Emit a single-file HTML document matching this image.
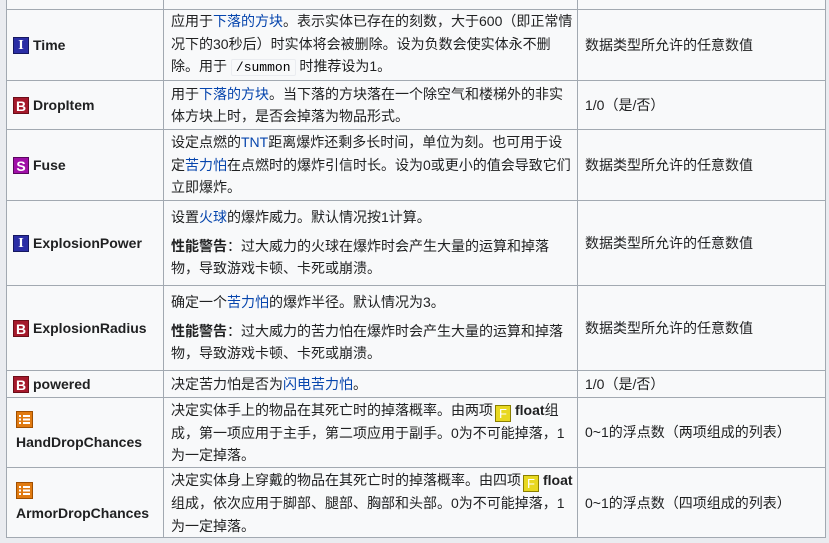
<!DOCTYPE html>
<html><head><meta charset="utf-8"><style>
*{margin:0;padding:0;box-sizing:border-box}
body{width:829px;height:543px;overflow:hidden;background:#eaecf0;font-family:"Liberation Sans","Noto Sans CJK SC",sans-serif;font-size:14px;color:#202122;position:relative}
.t{position:absolute;left:6px;top:-1px;width:820px;height:539px;background:#f8f9fa;border:1px solid #a2a9b1}
.r{position:absolute;left:6px;width:820px;border-top:1px solid #a2a9b1}
.c{position:absolute;top:0;bottom:0;display:flex;flex-direction:column;justify-content:center;line-height:22.5px}
.c1{left:0;width:157px;padding-left:7px;font-weight:bold}
.c1 .n{display:flex;align-items:center}
.c2{left:157px;width:414px;padding-left:7px;padding-right:9px;border-left:1px solid #a2a9b1}
.c3{left:571px;width:249px;padding-left:7px;border-left:1px solid #a2a9b1}
a{color:#0645ad;text-decoration:none}
.i{display:inline-block;width:16px;height:17px;color:#fff;font-size:14px;line-height:16px;text-align:center;font-weight:bold;margin-right:4px;font-family:"Liberation Serif",serif}
.I{background:#2b2ea5;border:1px solid #161860}
.B{background:#a5192b;border:1px solid #6b0d18;font-family:"Liberation Sans",sans-serif}
.S{background:#a010a8;border:1px solid #5a065e;font-family:"Liberation Sans",sans-serif}
.L{display:block;width:17px;height:17px;background:#e07a10;border:1px solid #a04f00;margin:0 0 3px 0;position:relative}
.L:before{content:"";position:absolute;left:2px;top:3px;width:2px;height:9px;background:repeating-linear-gradient(#fff 0 2px,transparent 2px 3.5px)}
.L:after{content:"";position:absolute;left:6px;top:3px;width:7px;height:9px;background:repeating-linear-gradient(#fff 0 2px,transparent 2px 3.5px)}
.F{display:inline-block;width:16px;height:17px;background:#e8d820;border:1px solid #8a7f00;color:#fff;font-size:13px;line-height:15px;text-align:center;margin:0 4px 0 2px;vertical-align:-3px}
.nw{white-space:nowrap}
code{font-family:"Liberation Mono",monospace;font-size:13px;background:#f8f9fa;border:1px solid #eaecf0;padding:0 4px;border-radius:2px;color:#000}
p+p{margin-top:6px}
</style></head><body>
<div class="t"></div>
<div class="r" style="top:-1px;height:10px"><div class="c c2"></div><div class="c c3"></div></div>
<div class="r" style="top:9px;height:71px"><div class="c c1"><div class="n"><span class="i I">I</span>Time</div></div><div class="c c2" style="padding-right:3px"><div>应用于<a>下落的方块</a>。表示实体已存在的刻数，大于600（即正常情况下的30秒后）时实体将会被删除。设为负数会使实体永不删除。用于 <code>/summon</code> 时推荐设为1。</div></div><div class="c c3">数据类型所允许的任意数值</div></div>
<div class="r" style="top:80px;height:49px"><div class="c c1"><div class="n"><span class="i B">B</span>DropItem</div></div><div class="c c2"><div>用于<a>下落的方块</a>。当下落的方块落在一个除空气和楼梯外的非实体方块上时，是否会掉落为物品形式。</div></div><div class="c c3">1/0（是/否）</div></div>
<div class="r" style="top:129px;height:71px"><div class="c c1"><div class="n"><span class="i S">S</span>Fuse</div></div><div class="c c2" style="padding-right:3px"><div>设定点燃的<a>TNT</a>距离爆炸还剩多长时间，单位为刻。也可用于设定<a>苦力怕</a>在点燃时的爆炸引信时长。设为0或更小的值会导致它们立即爆炸。</div></div><div class="c c3">数据类型所允许的任意数值</div></div>
<div class="r" style="top:200px;height:85px"><div class="c c1"><div class="n"><span class="i I">I</span>ExplosionPower</div></div><div class="c c2" style="padding-right:14px"><p>设置<a>火球</a>的爆炸威力。默认情况按1计算。</p><p><b>性能警告</b>：过大威力的火球在爆炸时会产生大量的运算和掉落物，导致游戏卡顿、卡死或崩溃。</p></div><div class="c c3">数据类型所允许的任意数值</div></div>
<div class="r" style="top:285px;height:85px"><div class="c c1"><div class="n"><span class="i B">B</span>ExplosionRadius</div></div><div class="c c2"><p>确定一个<a>苦力怕</a>的爆炸半径。默认情况为3。</p><p><b>性能警告</b>：过大威力的苦力怕在爆炸时会产生大量的运算和掉落物，导致游戏卡顿、卡死或崩溃。</p></div><div class="c c3">数据类型所允许的任意数值</div></div>
<div class="r" style="top:370px;height:27px"><div class="c c1"><div class="n"><span class="i B">B</span>powered</div></div><div class="c c2"><div>决定苦力怕是否为<a>闪电苦力怕</a>。</div></div><div class="c c3">1/0（是/否）</div></div>
<div class="r" style="top:397px;height:70px"><div class="c c1" style="padding-left:10px"><span class="L"></span><div>HandDropChances</div></div><div class="c c2"><div>决定实体手上的物品在其死亡时的掉落概率。由两项<span class="F">F</span><b>float</b>组成，第一项应用于主手，第二项应用于副手。0为不可能掉落，1为一定掉落。</div></div><div class="c c3">0~1的浮点数（两项组成的列表）</div></div>
<div class="r" style="top:467px;height:71px"><div class="c c1" style="padding-left:10px"><span class="L"></span><div>ArmorDropChances</div></div><div class="c c2" style="padding-right:0"><div>决定实体身上穿戴的物品在其死亡时的掉落概率。由四项<span class="nw"><span class="F">F</span><b>float</b></span><br>组成，依次应用于脚部、腿部、胸部和头部。0为不可能掉落，1为一定掉落。</div></div><div class="c c3">0~1的浮点数（四项组成的列表）</div></div>
</body></html>
